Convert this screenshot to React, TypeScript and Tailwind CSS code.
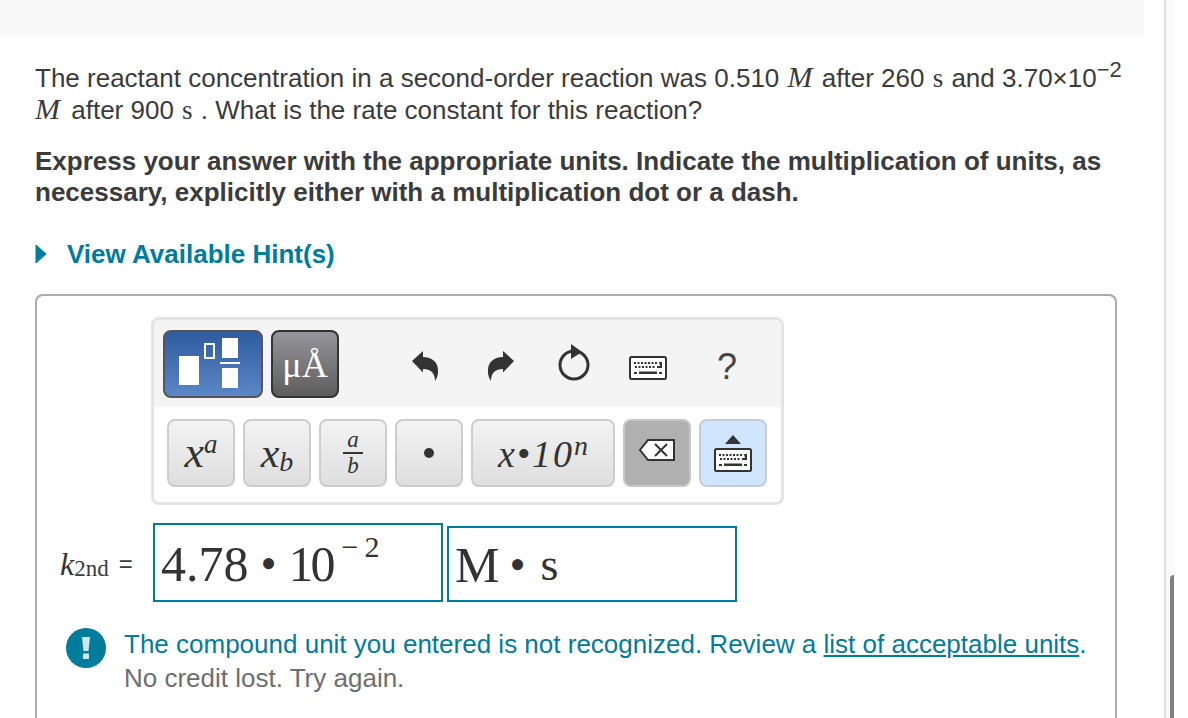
import type { ReactNode } from "react";

const serif = "font-['Liberation_Serif',serif]";

function Keyboard({ className }: { className?: string }) {
  return (
    <svg viewBox="0 0 38 24" className={className}>
      <rect x="1" y="1" width="36" height="22" rx="1.5" fill="#fff" stroke="#333" strokeWidth="2" />
      <path d="M5 6h2v2H5zM8.500 6h2v2h-2zM12 6h2v2h-2zM15.500 6h2v2h-2zM19 6h2v2h-2zM22.500 6h2v2h-2zM26 6h2v2h-2zM30 6h3v6h-5v-2h3zM6 10h2v2H6zM9.500 10h2v2h-2zM13 10h2v2h-2zM16.500 10h2v2h-2zM20 10h2v2h-2zM23.500 10h2v2h-2zM5 16h3v2H5zM10 15.500h18v2.500H10zM30 16h3v2h-3z" fill="#333" />
    </svg>
  );
}

function MathKey({ children, width = "w-[68px]" }: { children: ReactNode; width?: string }) {
  return (
    <button className={`${width} h-[68px] rounded-lg border-2 border-[#cdcdcd] bg-gradient-to-b from-[#f3f3f3] to-[#dedede] flex items-center justify-center text-[#333] ${serif} italic`}>
      {children}
    </button>
  );
}

export default function App() {
  return (
    <div className="h-[718px] w-[1188px] overflow-hidden flex bg-white text-[26px] leading-[32px] text-[#3b3b3b] font-['Liberation_Sans',sans-serif]">
      {/* Question column */}
      <div className="w-[1144px] shrink-0">
        <div className="h-[36px] bg-[#f9f9f9]" />
        <div className="pl-[35px] pt-[26px]">
          <p className="whitespace-nowrap">
            The reactant concentration in a second-order reaction was 0.510 <i className={`${serif} text-[30px] leading-[0] ml-[1px] mr-[2px]`}>M</i> after 260 <span className={`${serif} text-[27px] leading-[0] mx-[1px]`}>s</span> and 3.70×10
            <sup className="text-[22px] leading-[0] top-[-10px]">−2</sup>
          </p>
          <p className="whitespace-nowrap">
            <i className={`${serif} text-[30px] leading-[0] mr-[4px]`}>M</i> after 900 <span className={`${serif} text-[27px] leading-[0] mx-[1px]`}>s</span> . What is the rate constant for this reaction?
          </p>
          <p className="mt-[20px] font-bold whitespace-nowrap leading-[31px]">
            Express your answer with the appropriate units. Indicate the multiplication of units, as
            <br />
            necessary, explicitly either with a multiplication dot or a dash.
          </p>

          <div className="mt-[30px] flex items-center font-bold text-[#007c9c]">
            <svg viewBox="0 0 12 20" className="w-[12px] h-[20px]">
              <path d="M1 1l10 9-10 9z" fill="#007c9c" stroke="#007c9c" strokeLinejoin="round" />
            </svg>
            <span className="ml-[20px]">View Available Hint(s)</span>
          </div>

          {/* Answer box */}
          <div className="mt-[24px] w-[1082px] h-[460px] rounded-t-lg border-2 border-[#aaaaaa] border-b-0 pl-[114px] pt-[21px]">
            <div className="w-[633px] h-[188px] rounded-lg border-[3px] border-[#e4e4e4] overflow-hidden">
              <div className="h-[87px] bg-[#f4f4f4] flex pl-[9px] pt-[10px]">
                <button className="w-[100px] h-[68px] rounded-lg border-2 border-[#555] bg-gradient-to-b from-[#2f5c9f] to-[#5b87c6]">
                  <svg viewBox="2 2 96 64" className="w-full h-full">
                    <path d="M16 26h20v29H16z" fill="#fff" />
                    <path d="M42 14h9v14H42z" fill="none" stroke="#fff" strokeWidth="2" />
                    <path d="M59 8h16v20H59zM57 32h20v2H57zM59 38h16v20H59z" fill="#fff" />
                  </svg>
                </button>
                <button className={`ml-[8px] w-[68px] h-[68px] rounded-lg border-2 border-[#333] bg-gradient-to-b from-[#96959b] to-[#5d5d5d] text-white text-[36px] leading-[66px] ${serif}`}>
                  μÅ
                </button>
                <div className="flex items-start text-[#333]">
                  <svg viewBox="0 0 28 32" className="ml-[72px] mt-[20px] w-[28px] h-[32px]">
                    <path d="M1 11L12 1v6c9 0 16 5 15 16-.3 3-1.500 6-3 8 0-7-3-12-12-12v3.500z" fill="#333" />
                  </svg>
                  <svg viewBox="0 0 28 32" className="ml-[48px] mt-[20px] w-[28px] h-[32px]">
                    <path d="M27 11L16 1v6C7 7 0 12 1 23c.3 3 1.500 6 3 8 0-7 3-12 12-12v3.500z" fill="#333" />
                  </svg>
                  <svg viewBox="0 0 34 38" className="ml-[42px] mt-[13px] w-[34px] h-[38px]">
                    <circle cx="17" cy="22" r="14" fill="none" stroke="#333" strokeWidth="3" />
                    <path d="M14 1l11 8-11 7z" fill="#333" />
                  </svg>
                  <Keyboard className="ml-[38px] mt-[26px] w-[38px] h-[24px]" />
                  <span className="ml-[50px] mt-[17px] text-[36px] leading-[40px] text-[#444]">?</span>
                </div>
              </div>
              <div className="h-[95px] bg-white flex gap-[8px] pl-[13px] pt-[12px]">
                <MathKey>
                  <span className="text-[44px] leading-none">x</span>
                  <sup className="text-[27px] leading-none top-[-9px]">a</sup>
                </MathKey>
                <MathKey>
                  <span className="text-[42px] leading-none">x</span>
                  <sub className="text-[28px] leading-none bottom-[-9px]">b</sub>
                </MathKey>
                <MathKey>
                  <span className="flex flex-col items-center text-[23px] leading-[24.500px]">
                    <span>a</span>
                    <span className="w-[20px] h-[2px] bg-[#333]" />
                    <span>b</span>
                  </span>
                </MathKey>
                <MathKey>
                  <span className="w-[10px] h-[10px] rounded-full bg-[#333]" />
                </MathKey>
                <MathKey width="w-[144px]">
                  <span className="text-[38px] leading-none tracking-[2px] mt-[2px]">x•10</span>
                  <sup className="text-[28px] leading-none top-[-7px]">n</sup>
                </MathKey>
                <button className="w-[68px] h-[68px] rounded-lg border-2 border-[#c6c6c6] bg-[#b0b0b0] flex items-center justify-center">
                  <svg viewBox="0 0 38 24" className="w-[38px] h-[24px] mt-[-6px]">
                    <path d="M10 2h26v20H10L2 12z" fill="#fff" stroke="#333" strokeWidth="2" />
                    <path d="M17 6l12 12M29 6L17 18" stroke="#333" strokeWidth="2" />
                  </svg>
                </button>
                <button className="w-[68px] h-[68px] rounded-lg border-2 border-[#c6ccd2] bg-[#cfe5fd] flex flex-col items-center pt-[14px]">
                  <svg viewBox="0 0 16 9" className="w-[16px] h-[9px]">
                    <path d="M8 0l8 9H0z" fill="#333" />
                  </svg>
                  <Keyboard className="mt-[4px] w-[38px] h-[24px]" />
                </button>
              </div>
            </div>

            {/* Answer row */}
            <div className="mt-[18px] ml-[-92px] flex items-start">
              <div className="w-[94px] h-[79px] flex items-center pl-[1px] pt-[2px] whitespace-nowrap">
                <span className={`text-[#333] ${serif} italic text-[32px] leading-none`}>k</span>
                <span className={`text-[23px] leading-none mt-[10px] ${serif}`}>2nd</span>
                <span className="ml-[10px] text-[24px]">=</span>
              </div>
              <div className={`w-[290px] h-[79px] border-2 border-[#007c9c] pl-[6px] pt-[2px] flex items-center text-[50px] text-[#333] ${serif}`}>
                4.78
                <span className="ml-[12px] text-[46px]">•</span>
                <span className="ml-[12px] tracking-[-3px]">10</span>
                <span className="text-[30px] leading-none mt-[-34px] ml-[9px]">−</span>
                <span className="text-[30px] leading-none mt-[-34px] ml-[6px]">2</span>
              </div>
              <div className={`ml-[4px] mt-[3px] w-[290px] h-[76px] border-2 border-[#007c9c] pl-[6px] pt-[1px] flex items-center text-[50px] text-[#333] ${serif}`}>
                M
                <span className="ml-[10px] text-[46px]">•</span>
                <span className="ml-[15px] text-[46px]">s</span>
              </div>
            </div>

            {/* Feedback */}
            <div className="mt-[26px] ml-[-85px] flex items-start">
              <div className="w-[40px] h-[40px] rounded-full bg-[#007c9c] flex items-center justify-center shrink-0">
                <svg viewBox="0 0 8 22" className="w-[8px] h-[22px]">
                  <path d="M0 0h8l-1.500 14h-5zM1 16.500h6V22H1z" fill="#cfe8f0" />
                </svg>
              </div>
              <div className="ml-[18px] mt-[-1px] leading-[34px] whitespace-nowrap">
                <p className="text-[#007c9c]">
                  The compound unit you entered is not recognized. Review a <u>list of acceptable units</u>.
                </p>
                <p className="text-[#6d6e6e]">No credit lost. Try again.</p>
              </div>
            </div>
          </div>
        </div>
      </div>

      {/* Scroll rail */}
      <div className="ml-[20px] w-[10px] border-l-2 border-[#dfdfdf] bg-[#fafafa] flex flex-col justify-end">
        <div className="ml-[4px] w-[4px] h-[143px] rounded-tl-md bg-[#808080]" />
      </div>
    </div>
  );
}
